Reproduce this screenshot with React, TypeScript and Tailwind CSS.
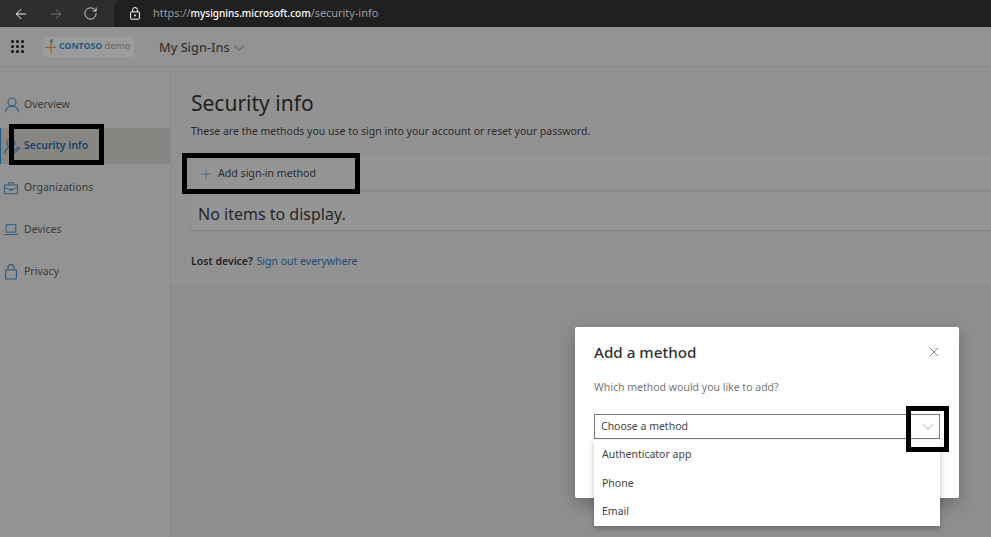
import { ArrowLeft, ArrowRight, RotateCw, ChevronDown, Plus, X } from "lucide-react";

const font = { fontFamily: '"Noto Sans", "Open Sans", sans-serif' };

function PadlockIcon({ className }: { className?: string }) {
  return (
    <svg viewBox="0 0 14 16" fill="none" stroke="currentColor" strokeWidth="1.2" className={className}>
      <path d="M4 6V3.600a3 3 0 0 1 6 0V6" />
      <rect x="1.600" y="6" width="10.800" height="9" rx="0.800" />
    </svg>
  );
}

function UserIcon({ className }: { className?: string }) {
  return (
    <svg viewBox="0 0 16 16" fill="none" stroke="currentColor" strokeWidth="1.1" className={className}>
      <circle cx="8" cy="5" r="4" />
      <path d="M1.500 15.500c0-3.600 2.800-6.500 6.500-6.500s6.500 2.900 6.500 6.500" />
    </svg>
  );
}

function UserEditIcon({ className }: { className?: string }) {
  return (
    <svg viewBox="0 0 16 16" fill="none" stroke="currentColor" strokeWidth="1.1" className={className}>
      <circle cx="7" cy="5" r="4" />
      <path d="M1 15.500c0-3.600 2.500-6.500 5.500-6.500" />
      <path d="M8 14l6-5 1.500 1.500-6 5H8z" />
    </svg>
  );
}

function BriefcaseIcon({ className }: { className?: string }) {
  return (
    <svg viewBox="0 0 16 14" fill="none" stroke="currentColor" strokeWidth="1.1" className={className}>
      <rect x="0.600" y="3.500" width="14.800" height="10" />
      <path d="M5 3.500V1h6v2.500" />
      <path d="M0.600 6.500L8 9.500l7.400-3" />
      <rect x="6.800" y="7.800" width="2.400" height="2.200" fill="currentColor" stroke="none" />
    </svg>
  );
}

function LaptopIcon({ className }: { className?: string }) {
  return (
    <svg viewBox="0 0 16 13" fill="none" stroke="currentColor" strokeWidth="1.1" className={className}>
      <rect x="2.500" y="1" width="11" height="8.500" />
      <path d="M0 12.300h16" />
    </svg>
  );
}

function DotsIcon() {
  return (
    <div className="grid h-[13px] w-[13px] grid-cols-3 gap-[2.500px]">
      {Array.from({ length: 9 }).map((_, i) => (
        <span key={i} className="h-[2.500px] w-[2.500px] rounded-full bg-[#0d0d0d]" />
      ))}
    </div>
  );
}

const navItems = [
  { label: "Overview", icon: UserIcon, size: "h-[16px] w-[16px]" },
  { label: "Security info", icon: UserEditIcon, size: "h-[16px] w-[16px]", active: true },
  { label: "Organizations", icon: BriefcaseIcon, size: "h-[14px] w-[14px]" },
  { label: "Devices", icon: LaptopIcon, size: "h-[13px] w-[14px]" },
  { label: "Privacy", icon: PadlockIcon, size: "h-[16px] w-[14px]" },
];

function BrowserBar() {
  return (
    <div className="flex h-[27px] items-center bg-[#2e2e2e]">
      <div className="flex w-[114px] shrink-0 items-center gap-[19px] pl-[13px]">
        <ArrowLeft className="h-[16px] w-[16px] text-white" strokeWidth={1.4} />
        <ArrowRight className="h-[16px] w-[16px] text-[#777777]" strokeWidth={1.4} />
        <RotateCw className="h-[15px] w-[15px] text-[#e5e5e5]" strokeWidth={1.4} />
      </div>
      <div className="flex h-full flex-1 items-center rounded-tl-md bg-[#202020] pl-[15px]">
        <svg viewBox="0 0 14 16" fill="none" stroke="currentColor" strokeWidth="1.2" className="h-[13px] w-[12px] text-white">
          <path d="M4 6V3.600a3 3 0 0 1 6 0V6" />
          <rect x="1.600" y="6" width="10.800" height="9" rx="0.800" />
          <rect x="6" y="9.500" width="2" height="2" fill="currentColor" stroke="none" />
        </svg>
        <span className="ml-[12px] text-[10.900px] text-[#9c9c9c]">
          https://<span className="text-[10px] font-medium text-white">mysignins.microsoft.com</span>/security-info
        </span>
      </div>
    </div>
  );
}

function Header() {
  return (
    <div className="flex h-[40px] items-center border-b border-[#8a8a8a] bg-[#939393] pl-[11px]">
      <DotsIcon />
      <div className="ml-[19px] flex h-[20px] w-[91px] items-center gap-[3px] bg-[#9b9b9b] px-[2px]">
        <svg viewBox="0 0 12 16" className="h-[17px] w-[11px] shrink-0">
          <path d="M6.500 3v13" stroke="#a8763f" strokeWidth="2" />
          <path d="M0 9h12" stroke="#8a6a45" strokeWidth="1.400" />
          <path d="M5.500 0h3v4h-3z" fill="#3f7898" />
        </svg>
        <span className="whitespace-nowrap text-[8.800px] font-bold text-[#1c5d82]">
          CONTOSO <span className="text-[9.500px] font-normal text-[#666666]">demo</span>
        </span>
      </div>
      <span className="ml-[25px] mt-[2px] text-[12.700px] font-medium text-[#333333]">My Sign-Ins</span>
      <ChevronDown className="mt-[2px] h-[18px] w-[18px] text-[#333333]" strokeWidth={1} />
    </div>
  );
}

function Sidebar() {
  return (
    <div className="w-[171px] shrink-0 border-r border-[#8a8a8a] bg-[#939393] pt-[19.500px]">
      {navItems.map(({ label, icon: Icon, size, active }) => (
        <div
          key={label}
          className={`mb-[5.750px] flex h-[36px] items-center text-[10.500px] ${
            active ? "border-l border-[#1c5a88] bg-[#888682] pl-[3px] font-semibold text-[#17436a]" : "pl-[4px] text-[#3a3a3a]"
          }`}
        >
          <span className="flex w-[20px] shrink-0 items-center">
            <Icon className={`${size} text-[#2a5a80]`} />
          </span>
          {label}
        </div>
      ))}
    </div>
  );
}

function Content() {
  return (
    <div className="flex-1">
      <div className="h-[218px] bg-[#929292] pl-[20px] pt-[21px]">
        <h1 className="text-[21px] leading-[30px] text-[#1f1f1f]">Security info</h1>
        <p className="mt-[6px] text-[10.500px] leading-[14px] text-[#2a2a2a]">
          These are the methods you use to sign into your account or reset your password.
        </p>
        <div className="mt-[19px] flex h-[33px] items-center bg-[#959595] pl-[7px] shadow-[0_1px_2px_rgba(0,0,0,0.12)]">
          <Plus className="h-[16px] w-[16px] text-[#345f80]" strokeWidth={1} />
          <span className="ml-[4px] mt-[1px] text-[10.600px] text-[#2a2a2a]">Add sign-in method</span>
        </div>
        <div className="mt-[2px] flex h-[38px] items-center bg-[#959595] pl-[7px] pt-[6px] text-[16px] text-[#262626] shadow-[0_1px_2px_rgba(0,0,0,0.15)]">
          No items to display.
        </div>
        <p className="mt-[24px] text-[10.500px] leading-[14px]">
          <span className="font-semibold text-[#222222]">Lost device?</span>{" "}
          <span className="ml-[1px] text-[#1d4a72]">Sign out everywhere</span>
        </p>
      </div>
    </div>
  );
}

function Modal() {
  return (
    <div className="absolute left-[575px] top-[327px] h-[171px] w-[384px] rounded-[2px] bg-white pl-[19px] pt-[15px] shadow-[0_6px_16px_rgba(0,0,0,0.25)]">
      <div className="text-[15.200px] font-medium leading-[20px] text-[#323130]">Add a method</div>
      <X className="absolute right-[17px] top-[17px] h-[16px] w-[16px] text-[#555555]" strokeWidth={1.100} />
      <p className="mt-[18px] text-[10.500px] leading-[14px] text-[#777777]">Which method would you like to add?</p>
      <div className="mt-[20px] flex h-[25px] w-[346px] items-center justify-between border border-[#7a7a7a] pl-[6px] pr-[2px] text-[10.500px] text-[#444444]">
        <span className="mt-[1px]">Choose a method</span>
        <ChevronDown className="h-[18px] w-[18px] text-[#777777]" strokeWidth={0.900} />
      </div>
      <div className="absolute left-[19px] top-[113px] flex h-[86px] w-[346px] flex-col bg-white pt-[1px] text-[10.500px] text-[#444444] shadow-[0_2px_6px_rgba(0,0,0,0.25)]">
        {["Authenticator app", "Phone", "Email"].map((o) => (
          <div key={o} className="flex h-[28.500px] shrink-0 items-center pl-[8px]">{o}</div>
        ))}
      </div>
    </div>
  );
}

export default function App() {
  return (
    <div className="relative h-[537px] w-[991px] overflow-hidden bg-[#8e8e8e]" style={font}>
      <BrowserBar />
      <Header />
      <div className="flex h-[470px]">
        <Sidebar />
        <Content />
      </div>
      <Modal />
      {/* annotation frames drawn over the screenshot */}
      <div className="absolute left-[9px] top-[124px] h-[41px] w-[95px] border-[5px] border-black" />
      <div className="absolute left-[182px] top-[153px] h-[41px] w-[178px] border-[5px] border-black" />
      <div className="absolute left-[906px] top-[406px] h-[46px] w-[43px] border-[5px] border-black" />
    </div>
  );
}
